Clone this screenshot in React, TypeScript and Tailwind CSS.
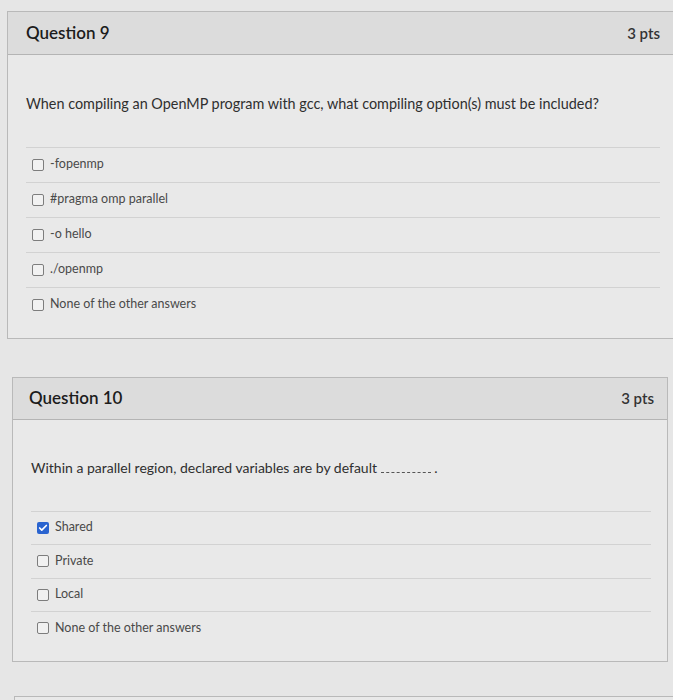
import { Check } from "lucide-react";

type Option = { label: string; checked?: boolean };

const q9Options: Option[] = [
  { label: "-fopenmp" },
  { label: "#pragma omp parallel" },
  { label: "-o hello" },
  { label: "./openmp" },
  { label: "None of the other answers" },
];

const q10Options: Option[] = [
  { label: "Shared", checked: true },
  { label: "Private" },
  { label: "Local" },
  { label: "None of the other answers" },
];

const Box = ({ checked }: { checked?: boolean }) =>
  checked ? (
    <span className="flex h-[12px] w-[12px] items-center justify-center rounded-[2px] bg-[#2a64d0]">
      <Check className="h-[10px] w-[10px] text-white" strokeWidth={4} />
    </span>
  ) : (
    <span className="h-[12px] w-[12px] rounded-[2px] border border-[#7d7d7d] bg-[#f1f1f1]" />
  );

const AnswerRow = ({ label, checked, tall }: Option & { tall?: boolean }) => (
  <div
    className={`flex items-center gap-[6px] border-t border-[#d2d2d2] pl-[6px] ${
      tall ? "h-[35px]" : "h-[33.5px]"
    }`}
  >
    <Box checked={checked} />
    <span className="text-[12.5px] text-[#4a4a4a]">{label}</span>
  </div>
);

const App = () => {
  return (
    <div className="h-[700px] w-[673px] overflow-hidden bg-[#e6e6e6] font-['Lato',sans-serif]">
      {/* Question 9 */}
      <div className="ml-[7px] mt-[11px] w-[680px] border border-[#b9b9b9] bg-[#e9e9e9]">
        <div className="flex h-[43px] items-center justify-between border-b border-[#b4b4b4] bg-[#dcdcdc] pl-[18px] pr-[26px]">
          <h2 className="text-[17px] font-semibold text-[#1c1c1c]">Question 9</h2>
          <span className="text-[15px] font-semibold text-[#333]">3 pts</span>
        </div>
        <div className="pb-[16px] pl-[18px] pr-[26px] pt-[38px]">
          <p className="text-[14.4px] text-[#2f2f2f]">
            When compiling an OpenMP program with gcc, what compiling option(s) must be included?
          </p>
          <div className="mt-[32px]">
            {q9Options.map((o) => (
              <AnswerRow key={o.label} {...o} tall />
            ))}
          </div>
        </div>
      </div>

      {/* Question 10 */}
      <div className="ml-[12px] mt-[38px] w-[656px] border border-[#b9b9b9] bg-[#e9e9e9]">
        <div className="flex h-[42px] items-center justify-between border-b border-[#b4b4b4] bg-[#dcdcdc] pl-[16px] pr-[13px]">
          <h2 className="text-[17px] font-semibold text-[#1c1c1c]">Question 10</h2>
          <span className="text-[15px] font-semibold text-[#333]">3 pts</span>
        </div>
        <div className="pb-[16px] pl-[18px] pr-[16px] pt-[37px]">
          <p className="text-[14px] text-[#2f2f2f]">
            Within a parallel region, declared variables are by default{" "}
            <span className="inline-block w-[50px] border-b border-dashed border-[#555]" /> .
          </p>
          <div className="mt-[33px]">
            {q10Options.map((o) => (
              <AnswerRow key={o.label} {...o} />
            ))}
          </div>
        </div>
      </div>

      {/* next question edge */}
      <div className="ml-[14px] mt-[34px] h-[20px] w-[660px] border-l border-t border-[#b9b9b9] bg-[#e9e9e9]" />
    </div>
  );
};

export default App;
